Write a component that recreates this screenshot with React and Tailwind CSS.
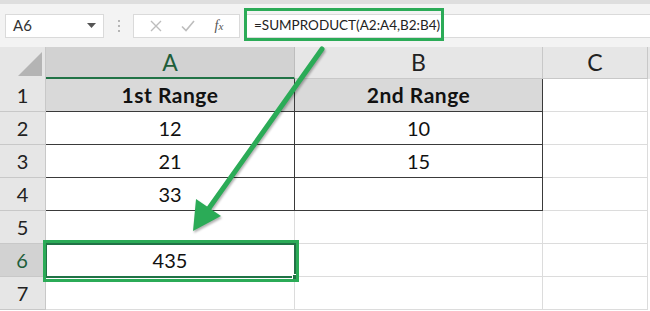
import React from "react";

const GREEN = "#2bab57";

const rows = [
  { n: 1, a: "1st Range", b: "2nd Range", head: true },
  { n: 2, a: "12", b: "10" },
  { n: 3, a: "21", b: "15" },
  { n: 4, a: "33", b: "" },
  { n: 5, a: "", b: "" },
  { n: 6, a: "435", b: "", selected: true },
  { n: 7, a: "", b: "" },
];

function Toolbar() {
  return (
    <div className="h-[47px] bg-[#f3f3f3] border-t-[4px] border-[#dedede] flex items-center">
      <div className="ml-[5px] w-[99px] h-[24px] bg-white border border-[#dadada] flex items-center justify-between px-[7px]">
        <span className="text-[15px] text-[#333]">A6</span>
        <svg width="9" height="5" viewBox="0 0 9 5">
          <path d="M0 0h9L4.5 5z" fill="#555" />
        </svg>
      </div>
      <div className="w-[29px] flex flex-col items-center gap-[3px]">
        <span className="w-[2px] h-[2px] bg-[#b5b5b5]" />
        <span className="w-[2px] h-[2px] bg-[#b5b5b5]" />
        <span className="w-[2px] h-[2px] bg-[#b5b5b5]" />
      </div>
      <div className="w-[107px] h-[24px] bg-white border border-[#dadada] flex items-center justify-around px-[6px]">
        <svg width="12" height="12" viewBox="0 0 12 12">
          <path d="M1 1l10 10M11 1L1 11" stroke="#bdbdbd" strokeWidth="1.4" />
        </svg>
        <svg width="14" height="12" viewBox="0 0 14 12">
          <path d="M1 6.5l4 4L13 1" stroke="#bdbdbd" strokeWidth="1.6" fill="none" />
        </svg>
        <span className="text-[14px] italic text-[#555] font-['Liberation_Serif',serif]">
          f<span className="text-[11px]">x</span>
        </span>
      </div>
      <div className="ml-[4px] flex-1 h-[24px] bg-white border-y border-[#dadada] flex items-center pl-[10px]">
        <span className="text-[13.5px] text-[#222]">=SUMPRODUCT(A2:A4,B2:B4)</span>
      </div>
    </div>
  );
}

function ColumnHeaders() {
  return (
    <div className="flex h-[32px] bg-[#e6e6e6] text-[23px] text-[#222]">
      <div className="w-[46px] relative border-r border-[#c8c8c8]">
        <svg className="absolute right-[3px] bottom-[3px]" width="24" height="24" viewBox="0 0 24 24">
          <path d="M24 0V24H0z" fill="#b4b4b4" />
        </svg>
      </div>
      <div className="w-[249px] bg-[#d2d2d2] border-b-2 border-[#217346] border-r border-r-[#bdbdbd] flex items-center justify-center text-[#1e5e3a]">
        A
      </div>
      <div className="w-[248px] border-r border-[#c8c8c8] border-b border-b-[#c8c8c8] flex items-center justify-center">
        B
      </div>
      <div className="w-[105px] border-r border-[#c8c8c8] border-b border-b-[#c8c8c8] flex items-center justify-center">
        C
      </div>
    </div>
  );
}

function Row({ r }) {
  const dark = r.n <= 4;
  const cellBase = "h-full flex items-center justify-center text-[#111]";
  const text = r.head ? "bg-[#d9d9d9] font-bold text-[21px] tracking-[0.5px]" : "bg-white text-[20px]";
  const border = dark ? "border-r border-b border-[#3a3a3a]" : "border-r border-b border-[#dcdcdc]";
  return (
    <div className="flex h-[33px]">
      <div
        className={
          r.selected
            ? "w-[46px] bg-[#d2d2d2] border-r-2 border-[#217346] border-b border-b-[#c8c8c8] flex items-center justify-center text-[20px] text-[#1e5e3a]"
            : "w-[46px] bg-[#e6e6e6] border-r border-[#c8c8c8] border-b border-b-[#c8c8c8] flex items-center justify-center text-[20px] text-[#222]"
        }
      >
        {r.n}
      </div>
      <div className={`${cellBase} w-[249px] ${border} ${text}`}>{r.a}</div>
      <div className={`${cellBase} w-[248px] ${border} ${text}`}>{r.b}</div>
      <div className="w-[105px] h-full bg-white border-r border-b border-[#dcdcdc]" />
    </div>
  );
}

export default function App() {
  return (
    <div className="w-[650px] h-[311px] relative overflow-hidden bg-white font-['Lato','Liberation_Sans',sans-serif]">
      <Toolbar />
      <ColumnHeaders />
      {rows.map((r) => (
        <Row key={r.n} r={r} />
      ))}

      {/* annotation: formula highlight */}
      <div className="absolute left-[244px] top-[8px] w-[200px] h-[33px] border-[3px] border-[#2bab57]" />

      {/* selected cell A6 */}
      <div className="absolute left-[45px] top-[243px] w-[251px] h-[35px] border-2 border-[#217346]" />
      <div className="absolute left-[292px] top-[274px] w-[6px] h-[6px] bg-[#217346] border border-white" />
      <div className="absolute left-[43px] top-[240px] w-[256px] h-[42px] border-[3px] border-[#2bab57]" />

      {/* arrow */}
      <svg
        className="absolute left-0 top-0 drop-shadow-[1px_2px_1px_rgba(0,0,0,0.3)]"
        width="650"
        height="311"
        viewBox="0 0 650 311"
      >
        <line x1="322" y1="49" x2="207" y2="211" stroke={GREEN} strokeWidth="5" strokeLinecap="round" />
        <path d="M193 231 L196 199 L221 216 Z" fill={GREEN} />
      </svg>
    </div>
  );
}
